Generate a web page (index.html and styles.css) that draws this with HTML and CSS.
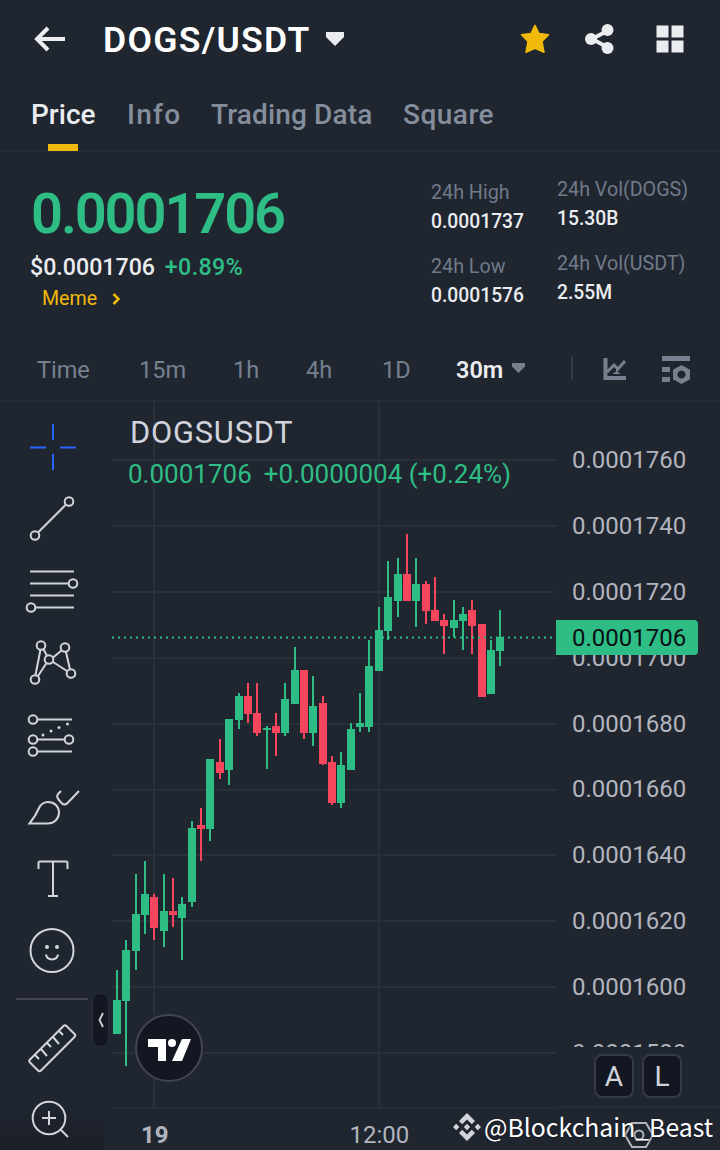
FILE: index.html
```html
<!DOCTYPE html>
<html lang="en">

<head>
  <meta charset="UTF-8">
  <meta name="viewport" content="width=device-width, initial-scale=1.0">
  <title>DOGS/USDT</title>
  <link rel="stylesheet" href="styles.css">
</head>

<body>
  <header class="topbar">
    <svg class="back" width="32" height="26" viewBox="0 0 32 26"><path d="M31 13H4M14 2L3 13l11 11" /></svg>
    <h1 class="pair">DOGS/USDT</h1>
    <svg class="pair-arrow" width="18" height="14" viewBox="0 0 18 14"><path d="M0 0h18v5l-9 9-9-9z" /></svg>
    <div class="actions">
      <svg width="32" height="32" viewBox="0 0 32 32"><path class="star" d="M16 2.300l4 8.200 9.500 1.200-6.500 6.700 2 10.900L16 25.200l-9 4.100 2-10.900-6.500-6.700 9.500-1.200z" /></svg>
      <svg width="32" height="32" viewBox="0 0 32 32"><path class="share-line" d="M24 7L7 16l17 9" /><circle cx="6" cy="16" r="6" /><circle cx="22.500" cy="7" r="6" /><circle cx="22.500" cy="25" r="6" /></svg>
      <svg width="32" height="32" viewBox="0 0 32 32"><path d="M2.500 2.500h12v12h-12zM17.500 2.500h12v12h-12zM2.500 17.500h12v12h-12zM17.500 17.500h12v12h-12z" /></svg>
    </div>
  </header>

  <nav class="tabs">
    <a class="tab active">Price</a>
    <a class="tab info">Info</a>
    <a class="tab data">Trading Data</a>
    <a class="tab square">Square</a>
  </nav>

  <section class="ticker">
    <div class="quote">
      <div class="last">0.0001706</div>
      <div class="fiat">$0.0001706 <span class="up">+0.89%</span></div>
      <div class="tag">Meme <svg width="8" height="12" viewBox="0 0 8 12"><path d="M1.500 1l5 5-5 5" /></svg></div>
    </div>
    <div class="stats">
      <dl><dt>24h High</dt><dd>0.0001737</dd></dl>
      <dl><dt>24h Low</dt><dd>0.0001576</dd></dl>
    </div>
    <div class="stats volume">
      <dl><dt>24h Vol(DOGS)</dt><dd>15.30B</dd></dl>
      <dl><dt>24h Vol(USDT)</dt><dd>2.55M</dd></dl>
    </div>
  </section>

  <div class="intervals">
    <span>Time</span>
    <span>15m</span>
    <span>1h</span>
    <span>4h</span>
    <span>1D</span>
    <span class="current">30m <svg width="13" height="10" viewBox="0 0 13 10"><path d="M0 0h13v3.500L6.500 10 0 3.500z" /></svg></span>
    <i class="divider"></i>
    <svg width="24" height="24" viewBox="0 0 24 24"><path class="thick" d="M2.500 0v20H23" /><path class="thin" d="M4 14l7-7 4 4 7-8" /><path d="M13 9.500h1.500v4l3 2.500h-8l3.500-2.500z" /></svg>
    <svg width="30" height="30" viewBox="0 0 30 30"><path d="M1 1h28v5H1zM1 12h8v5H1zM1 22h8v5H1z" /><path fill-rule="evenodd" d="M20.500 10l8.500 4.700v9.600L20.500 29 12 24.300v-9.600zM20.500 15.500a4 4 0 1 0 .01 0z" /></svg>
  </div>

  <main class="chart">
    <aside class="tools">
      <svg class="cross" viewBox="0 0 72 72"><path d="M37 13v16M37 43v16M14 36.500h16M44 36.500h16" /></svg>
      <svg viewBox="0 0 72 72"><circle cx="53" cy="18.500" r="4.300" /><circle cx="19" cy="52.500" r="4.300" /><path d="M50 21.500L22 49.500" /></svg>
      <svg viewBox="0 0 72 72"><path d="M14 16.500h44M14 28.500h39M14 40.500h44M19 52.500h39" /><circle cx="57" cy="28.500" r="4.300" /><circle cx="15" cy="52.500" r="4.300" /></svg>
      <svg viewBox="0 0 72 72"><path d="M19.500 48l5-25.500M27.500 22l3.500 7M30.500 36L22 49M37 30.500l8.500-7M50 25l4 17.500M37 35l14 9" /><circle cx="25" cy="18.500" r="4.300" /><circle cx="49" cy="20.500" r="4.300" /><circle cx="33" cy="32.500" r="4.300" /><circle cx="55" cy="46.500" r="4.300" /><circle cx="19" cy="52.500" r="4.300" /></svg>
      <svg viewBox="0 0 72 72"><path d="M21 20.500h35M21 40.500h28M21 52.500h35" /><circle cx="17" cy="20.500" r="4.300" /><circle cx="17" cy="40.500" r="4.300" /><circle cx="53" cy="40.500" r="4.300" /><circle cx="17" cy="52.500" r="4.300" /><g class="dots"><circle cx="27" cy="36" r="1.500" /><circle cx="35" cy="32" r="1.500" /><circle cx="43" cy="28.500" r="1.500" /><circle cx="51.500" cy="25" r="1.500" /></g></svg>
      <svg viewBox="0 0 72 72"><path d="M13.500 52.500h18c7 0 11.500-5 11.500-11s-4.500-10.500-11-10.500c-4 0-7 2-9 6-2.500 6-5 10-9.500 15.500zM45 20l-2.500 2.500c-1.500 1.500-1.500 4 0 6l3 3.500c2 2 4 2 6 0L63 20" /></svg>
      <svg viewBox="0 0 72 72"><path d="M22.500 26v-6q0-1.500 1.500-1.500h26q1.500 0 1.500 1.500v6M37 18.500V53M32 53h10" /></svg>
      <svg viewBox="0 0 72 72"><circle cx="36" cy="35.500" r="21.500" /><path d="M30 39.500c1 6.500 11 6.500 12 0" /><g class="dots"><circle cx="31" cy="32" r="2" /><circle cx="41" cy="32" r="2" /></g></svg>
      <hr>
      <svg viewBox="0 0 72 72"><path d="M47.500 14q1.500-1.500 3 0l8 8q1.500 1.500 0 3L25 58.500q-1.500 1.500-3 0l-8-8q-1.500-1.500 0-3zM19 43l4 4M25 37l6 7M31 31l4 4M37 25l6 7M43 19l4 4" /></svg>
      <svg viewBox="0 0 72 72"><circle cx="33" cy="34" r="16.300" /><path d="M26 34h14M33 27v14M45 46l7 7" /></svg>
    </aside>

    <section class="plot">
      <svg id="candles" width="444" height="707" viewBox="112 400 444 707"></svg>
      <div class="legend">
        <div class="symbol">DOGSUSDT</div>
        <div class="values"><span>0.0001706</span><span>+0.0000004 (+0.24%)</span></div>
      </div>
      <div class="collapse"><svg width="6" height="16" viewBox="0 0 6 16"><path d="M5 1L1.500 8 5 15" /></svg></div>
      <div class="tv">
        <svg width="44" height="22" viewBox="0 0 44 22"><path d="M0 0h18v22h-8V8H0z" /><circle cx="24" cy="4" r="4" /><path d="M34 0h9l-9 22H24z" /></svg>
      </div>
      <div class="times"><b>19</b><span>12:00</span></div>
    </section>

    <aside class="scale">
      <div class="prices" id="prices"></div>
      <div class="current-price">0.0001706</div>
      <div class="modes"><button>A</button><button>L</button></div>
      <svg class="hexagon" width="30" height="28" viewBox="0 0 30 28"><path d="M8 2h14l7 12-7 12H8L1 14z" /><circle cx="15" cy="14" r="4.500" /></svg>
    </aside>

    <div class="watermark">
      <svg width="28" height="28" viewBox="0 0 28 28"><path d="M14 0l8 8-3.200 3.200L14 6.400l-4.800 4.800L6 8zM14 28l-8-8 3.200-3.200 4.800 4.800 4.800-4.800L22 20zM3.200 10.800L6.400 14l-3.200 3.200L0 14zM24.800 10.800L28 14l-3.200 3.200-3.200-3.200zM14 10.800l3.200 3.200-3.200 3.200-3.200-3.200z" /></svg>
      <span>@Blockchain_Beast</span>
    </div>
  </main>
  <script src="script.js"></script>
</body>

</html>
```
FILE: styles.css
```css
* {
  box-sizing: border-box;
}

body {
  margin: 0;
  width: 720px;
  height: 1150px;
  overflow: hidden;
  background-color: #202630;
  color: #eaecef;
  font-family: Roboto, "Noto Sans", sans-serif;
}

/* top bar */
.topbar {
  height: 77px;
  padding: 0 34px;
  display: flex;
  align-items: center;
  fill: #eaecef;
}

.back {
  fill: none;
  stroke: #eaecef;
  stroke-width: 4;
}

.pair {
  margin: 3px 17px 0 37px;
  width: 206px;
  font-size: 35.5px;
  font-weight: 600;
  letter-spacing: 1.3px;
  color: #fff;
  white-space: nowrap;
}

.actions {
  margin-left: auto;
  display: flex;
  gap: 34px;
}

.actions svg:last-child {
  margin-left: 3px;
}

.star {
  fill: #f0b90b;
  stroke: #f0b90b;
  stroke-width: 1.5;
  stroke-linejoin: round;
}

.share-line {
  fill: none;
  stroke: #eaecef;
  stroke-width: 4;
}

/* tabs */
.tabs {
  height: 75px;
  display: flex;
  padding-left: 31px;
  border-bottom: 2px solid #272d37;
  font-size: 28px;
  font-weight: 500;
  color: #848e9c;
}

.tab {
  padding-top: 21px;
  position: relative;
  white-space: nowrap;
}

.tab.active {
  width: 96px;
  color: #eaecef;
}

.tab.info {
  width: 84px;
  letter-spacing: 1.3px;
}

.tab.data {
  width: 192px;
  letter-spacing: 0.15px;
}

.tab.square {
  letter-spacing: 0.5px;
}

.tab.active::after {
  content: "";
  position: absolute;
  left: 17px;
  bottom: -1px;
  width: 30px;
  height: 7px;
  background-color: #f0b90b;
}

/* price and 24h stats */
.ticker {
  height: 188px;
  display: flex;
  padding-left: 31px;
}

.quote {
  width: 400px;
}

.last {
  margin-top: 30px;
  height: 64px;
  line-height: 64px;
  font-size: 56px;
  font-weight: 600;
  letter-spacing: -2.1px;
  color: #2ebd85;
}

.fiat {
  height: 41px;
  line-height: 43px;
  font-size: 23.2px;
  font-weight: 500;
  margin-left: -1px;
}

.up {
  color: #2ebd85;
  margin-left: 4px;
  letter-spacing: 0.4px;
}

.tag {
  margin-left: 11px;
  line-height: 23px;
  font-size: 19.6px;
  color: #f0b90b;
}

.tag svg {
  margin-left: 10px;
  fill: none;
  stroke: #f0b90b;
  stroke-width: 2.5;
}

.stats {
  width: 126px;
  padding-top: 28px;
  white-space: nowrap;
}

.volume {
  padding-top: 25px;
}

.stats dl {
  margin: 0;
  height: 74px;
}

.stats dt {
  font-size: 19.7px;
  line-height: 26px;
  color: #707a8a;
}

.stats dd {
  margin: 0;
  font-size: 19.3px;
  line-height: 32px;
  font-weight: 500;
}

/* interval picker */
.intervals {
  height: 60px;
  display: grid;
  grid-template-columns: 102px 94px 73px 76px 74px 115px 32px 58px 30px;
  align-items: center;
  padding-left: 37px;
  font-size: 23.5px;
  color: #76808f;
  fill: #76808f;
}

.intervals .current {
  font-weight: 600;
  color: #eaecef;
}

.current svg {
  margin: 0 0 5px 3px;
}

.divider {
  width: 2px;
  height: 24px;
  margin-top: -4px;
  background-color: #333b47;
}

.thick,
.thin {
  fill: none;
  stroke: #76808f;
  stroke-width: 4;
}

.thin {
  stroke-width: 3;
}

/* chart */
.chart {
  position: relative;
  height: 750px;
  display: flex;
  border-top: 2px solid #272d37;
}

.tools {
  width: 104px;
  margin-right: 8px;
  padding: 9px 0 0 16px;
  display: flex;
  flex-direction: column;
  background: linear-gradient(transparent 700px, #191e27 750px);
}

.tools svg {
  width: 72px;
  height: 72px;
  flex: none;
  fill: none;
  stroke: #d1d4dc;
  stroke-width: 2;
}

.tools .cross {
  stroke: #2962ff;
}

.tools .dots {
  fill: #d1d4dc;
  stroke: none;
}

.tools hr {
  width: 72px;
  height: 2px;
  flex: none;
  margin: 11px 0 12px;
  border: 0;
  background-color: #434651;
}

.plot {
  position: relative;
  width: 444px;
}

#candles {
  display: block;
  margin-top: -2px;
}

.grid {
  stroke: #2a303a;
  stroke-width: 2;
}

.green {
  fill: #2ebd85;
}

.red {
  fill: #f6465d;
}

.price-line {
  stroke: #2ebd85;
  stroke-width: 2;
  stroke-dasharray: 2 4;
}

.legend {
  position: absolute;
  top: 13px;
  left: 16px;
  white-space: nowrap;
}

.symbol {
  margin-left: 2px;
  font-size: 30.8px;
  line-height: 36px;
  letter-spacing: 0.8px;
  color: #d1d4dc;
}

.values {
  display: flex;
  gap: 12px;
  margin-top: 6px;
  font-size: 26px;
  line-height: 34px;
  color: #2ebd85;
}

.collapse {
  position: absolute;
  left: -20px;
  top: 591px;
  width: 17px;
  height: 54px;
  border: 1px solid #2a2e39;
  border-radius: 8px;
  background-color: #131722;
  display: flex;
  align-items: center;
  justify-content: center;
}

.collapse svg {
  fill: none;
  stroke: #d1d4dc;
  stroke-width: 1.8;
}

.tv {
  position: absolute;
  left: 23px;
  top: 612px;
  width: 68px;
  height: 68px;
  border: 2px solid #434651;
  border-radius: 50%;
  background-color: #131722;
  display: flex;
  align-items: center;
  justify-content: center;
  fill: #fff;
}

.tv svg {
  margin: 3px 0 0 1px;
}

.times {
  height: 43px;
  border-top: 2px solid #272d37;
  display: flex;
  padding: 11px 0 0 29px;
  gap: 181px;
  font-size: 24px;
  line-height: 30px;
  color: #b2b5be;
}

.scale {
  position: relative;
  width: 164px;
}

.prices {
  height: 645px;
  overflow: hidden;
  padding: 25.4px 0 0 16px;
  font-size: 24px;
  color: #b2b5be;
}

.prices div {
  height: 65.82px;
  line-height: 66px;
}

.current-price {
  position: absolute;
  top: 218px;
  left: 0;
  width: 142px;
  height: 35px;
  padding-left: 16px;
  border-radius: 0 4px 4px 0;
  background-color: #2ebd85;
  color: #0c0e14;
  font-size: 24px;
  line-height: 37px;
}

.modes {
  height: 61px;
  padding: 7px 0 0 38px;
  display: flex;
  gap: 8px;
  border-bottom: 2px solid #272d37;
}

.modes button {
  width: 40px;
  height: 44px;
  padding: 0;
  border: 2px solid #363a45;
  border-radius: 8px;
  background-color: #131722;
  color: #d1d4dc;
  font: 28px Roboto, sans-serif;
}

.hexagon {
  margin: 13px 0 0 68px;
  fill: none;
  stroke: #b2b5be;
  stroke-width: 2;
}

.watermark {
  position: absolute;
  left: 453px;
  top: 707px;
  display: flex;
  align-items: center;
  gap: 3px;
  font-family: "Noto Sans CJK SC", sans-serif;
  font-size: 24.8px;
  line-height: 34px;
  color: #fff;
  fill: #d1d4dc;
  text-shadow: 0 1px 2px #131722;
}

.watermark svg {
  margin-top: 1px;
}
```
FILE: script.js
```js
// center x, high, body top, body bottom, low, rising
const candles = [
  [117, 970, 1000, 1034, 1034, 1], [126, 940, 950, 1001, 1066, 1], [136, 874, 914, 951, 970, 1],
  [145, 861, 894, 915, 934, 1], [154, 894, 897, 928, 940, 0], [164, 874, 911, 931, 947, 1],
  [173, 878, 911, 915, 927, 0], [182, 897, 904, 918, 960, 1], [192, 821, 828, 902, 907, 1],
  [201, 808, 825, 829, 861, 0], [210, 759, 759, 829, 841, 1], [220, 739, 762, 773, 779, 0],
  [229, 719, 719, 770, 785, 1], [239, 693, 696, 720, 729, 1], [248, 683, 696, 714, 723, 0],
  [257, 683, 713, 733, 736, 0], [267, 726, 728, 730, 769, 1], [276, 713, 726, 733, 756, 0],
  [285, 683, 699, 733, 736, 1], [295, 647, 670, 704, 704, 1], [304, 670, 670, 733, 739, 0],
  [313, 676, 706, 733, 746, 1], [323, 696, 703, 764, 765, 0], [332, 756, 762, 803, 805, 0],
  [341, 752, 765, 803, 808, 1], [351, 723, 729, 770, 770, 1], [360, 693, 723, 727, 732, 1],
  [369, 640, 666, 727, 732, 1], [379, 607, 630, 671, 671, 1], [388, 561, 597, 631, 640, 1],
  [398, 558, 574, 601, 617, 1], [407, 534, 574, 601, 601, 0], [416, 558, 584, 601, 627, 1],
  [426, 581, 584, 611, 624, 0], [435, 577, 610, 621, 621, 0], [444, 614, 620, 626, 654, 0],
  [454, 600, 620, 628, 637, 1], [463, 607, 614, 621, 650, 1], [472, 600, 610, 626, 654, 0],
  [482, 624, 624, 697, 697, 0], [491, 640, 650, 694, 694, 1], [500, 610, 637, 651, 666, 1]
];

let svg = '';
[460, 526, 592, 658, 724, 790, 855, 921, 987, 1053].forEach(y => {
  svg += `<path class="grid" d="M112 ${y}H556" />`;
});
[154, 379].forEach(x => {
  svg += `<path class="grid" d="M${x} 400V1107" />`;
});
candles.forEach(([x, high, top, bottom, low, rising]) => {
  svg += `<g class="${rising ? 'green' : 'red'}">
    <rect x="${x - 1}" y="${high}" width="2" height="${low - high}" />
    <rect x="${x - 4}" y="${top}" width="8" height="${bottom - top}" />
  </g>`;
});
svg += '<path class="price-line" d="M112 637.5H553" />';
document.getElementById('candles').innerHTML = svg;

let labels = '';
for (let p = 1760; p >= 1580; p -= 20) {
  labels += `<div>0.000${p}</div>`;
}
document.getElementById('prices').innerHTML = labels;
```
